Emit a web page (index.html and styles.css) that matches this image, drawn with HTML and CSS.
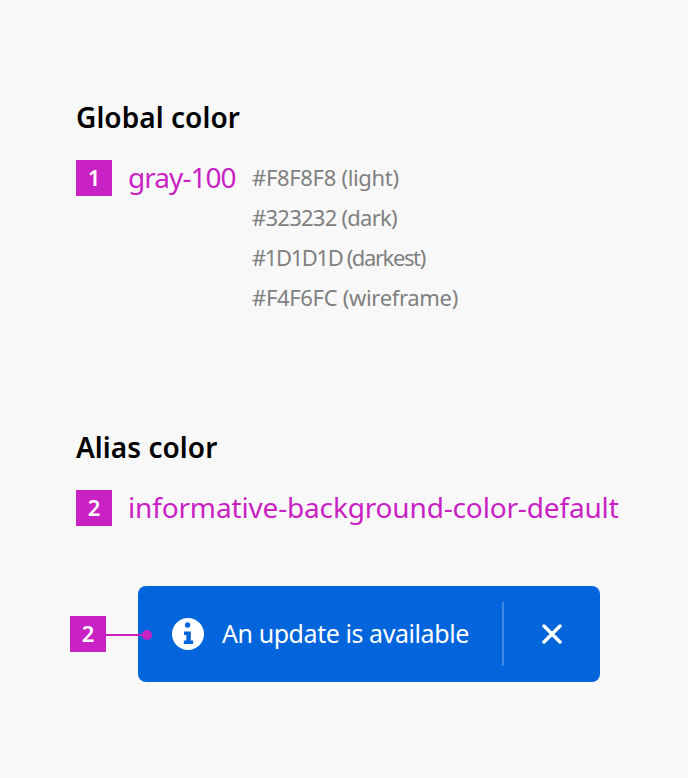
FILE: index.html
```html
<!DOCTYPE html>
<html lang="en">
<head>
<meta charset="utf-8">
<title>Toast color</title>
<link rel="stylesheet" href="styles.css">
</head>
<body>
<main class="page">
  <section class="group group-global">
    <h2 class="title">Global color</h2>
    <div class="row">
      <span class="badge">1</span>
      <span class="token token-short">gray-100</span>
      <ul class="values">
        <li>#F8F8F8 (light)</li>
        <li class="value-tight">#323232 (dark)</li>
        <li class="value-tighter">#1D1D1D (darkest)</li>
        <li>#F4F6FC (wireframe)</li>
      </ul>
    </div>
  </section>
  <section class="group group-alias">
    <h2 class="title">Alias color</h2>
    <div class="row">
      <span class="badge">2</span>
      <span class="token">informative-background-color-default</span>
    </div>
  </section>
  <div class="demo">
    <span class="badge">2</span>
    <div class="toast">
      <span class="leader"><span class="dot"></span></span>
      <svg class="info" viewBox="0 0 32 32" width="32" height="32" aria-hidden="true">
        <circle cx="16" cy="16" r="16" fill="#fff"/>
        <circle cx="15.6" cy="7" r="2.7" fill="#0265dc"/>
        <path d="M12 13.5h6.8v9h2.4V26H11.8v-3.5h2.5v-5.6H12z" fill="#0265dc"/>
      </svg>
      <span class="message">An update is available</span>
      <span class="divider"></span>
      <svg class="close" viewBox="0 0 20 20" width="20" height="20" aria-hidden="true">
        <path d="M2 2l16 16M18 2L2 18" stroke="#fff" stroke-width="3.4" stroke-linecap="round" fill="none"/>
      </svg>
    </div>
  </div>
</main>
</body>
</html>
```
FILE: styles.css
```css
* { box-sizing: border-box; }
html, body { margin: 0; padding: 0; }
body {
  background: #f8f8f8;
  font-family: "Noto Sans", "Open Sans", sans-serif;
  width: 688px;
  height: 778px;
  overflow: hidden;
}
.page { padding: 100px 0 0 76px; }
.title {
  margin: 0;
  font-size: 28px;
  line-height: 34px;
  font-weight: 600;
  letter-spacing: 0.05px;
  color: #000;
}
.group-global { height: 330px; }
.group-alias { height: 156px; }
.row {
  display: flex;
  align-items: flex-start;
  margin-top: 26px;
}
.badge {
  flex: none;
  width: 36px;
  height: 36px;
  background: #c922c4;
  color: #fff;
  font-size: 22px;
  font-weight: 600;
  line-height: 35px;
  text-align: center;
}
.token {
  margin-left: 16px;
  font-size: 28px;
  line-height: 34px;
  letter-spacing: -0.16px;
  color: #c922c4;
  white-space: nowrap;
}
.token-short {
  width: 108px;
  letter-spacing: -0.95px;
}
.values {
  list-style: none;
  margin: -3px 0 0 16px;
  padding: 0;
  font-size: 22px;
  line-height: 40px;
  letter-spacing: -0.32px;
  color: #808080;
}
.value-tight { letter-spacing: -0.75px; }
.value-tighter { letter-spacing: -1.4px; }
.demo {
  display: flex;
  align-items: center;
  margin-left: -6px;
}
.toast {
  position: relative;
  display: flex;
  align-items: center;
  width: 462px;
  height: 96px;
  margin-left: 32px;
  padding-left: 34px;
  background: #0265dc;
  border-radius: 8px;
  color: #fff;
}
.leader {
  position: absolute;
  left: -32px;
  top: 48px;
  width: 41px;
  height: 2px;
  background: #c922c4;
}
.dot {
  position: absolute;
  right: -5px;
  top: -4px;
  width: 10px;
  height: 10px;
  border-radius: 50%;
  background: #c922c4;
}
.info { flex: none; display: block; }
.message {
  margin-left: 18px;
  width: 280px;
  padding-bottom: 3px;
  font-size: 25px;
  line-height: 36px;
  letter-spacing: -0.43px;
  white-space: nowrap;
}
.divider {
  flex: none;
  width: 2px;
  height: 64px;
  background: rgba(255, 255, 255, 0.25);
}
.close { flex: none; display: block; margin-left: 38px; }
```
